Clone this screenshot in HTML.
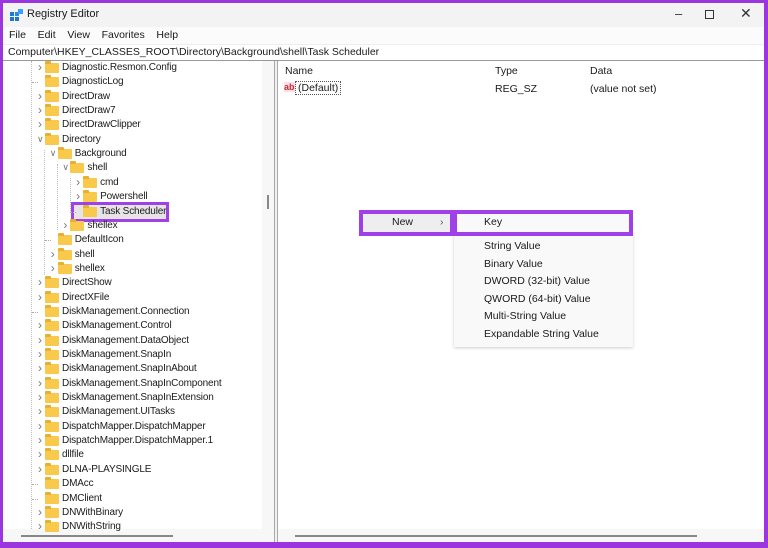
<!DOCTYPE html>
<html><head><meta charset="utf-8"><style>
*{margin:0;padding:0;box-sizing:border-box}
body{width:768px;height:548px;overflow:hidden;background:#9a35e0;font-family:"Liberation Sans",sans-serif;font-size:10.5px;color:#1a1a1a;position:relative}
.win{position:absolute;left:3px;top:3px;width:761px;height:539px;background:#fff;overflow:hidden}
.a{position:absolute;white-space:nowrap}
.row{position:absolute;height:14px;line-height:14px;white-space:nowrap;font-size:10px;letter-spacing:-0.15px}
.fold{position:absolute;width:14px;height:10px;background:#f8c94a;border-radius:1px;top:2px}
.fold:before{content:"";position:absolute;left:0;top:-2px;width:6px;height:3px;background:#e8b030;border-radius:1px 1px 0 0}
.chev{position:absolute;top:0;color:#777;font-size:9px}
.dot{position:absolute;top:7px;width:6px;border-top:1px dotted #aaa}
</style></head><body>
<div class="win">
<div class="a" style="left:0;top:0;width:761px;height:24px;background:#f3f3f3"></div>
<svg class="a" style="left:7px;top:6px" width="13" height="13"><rect x="0" y="3" width="4" height="4" fill="#1e78d0"/><rect x="5" y="3" width="4" height="4" fill="#2a8ae0"/><rect x="0" y="8" width="4" height="4" fill="#1e78d0"/><rect x="5" y="8" width="4" height="4" fill="#1e78d0"/><rect x="8" y="0" width="5" height="5" fill="#3aa0ff"/></svg>
<div class="a" style="left:24px;top:5px;font-size:11px">Registry Editor</div>
<div class="a" style="left:672px;top:3px;font-size:13px;color:#333">–</div>
<div class="a" style="left:702px;top:7px;width:9px;height:9px;border:1px solid #333"></div>
<div class="a" style="left:737px;top:2px;font-size:14px;color:#333">✕</div>
<div class="a" style="left:0;top:24px;width:761px;height:17px;background:#fbfbfb"></div>
<div class="a" style="left:6px;top:26px;font-size:10.5px">File&nbsp;&nbsp;&nbsp; Edit&nbsp;&nbsp;&nbsp; View&nbsp;&nbsp;&nbsp; Favorites&nbsp;&nbsp;&nbsp; Help</div>
<div class="a" style="left:0;top:41px;width:761px;height:17px;background:#fff;border-top:1px solid #eee;border-bottom:1px solid #999"></div>
<div class="a" style="left:5px;top:43px;font-size:10.5px">Computer\HKEY_CLASSES_ROOT\Directory\Background\shell\Task Scheduler</div>
<div class="a" style="left:259px;top:58px;width:12px;height:468px;background:#f7f7f7"></div>
<div class="a" style="left:264px;top:192px;width:2px;height:14px;background:#888"></div>
<div class="a" style="left:271px;top:58px;width:4px;height:481px;border-left:1px solid #aaa;border-right:1px solid #aaa;background:#f0f0f0"></div>
<div class="a" style="left:0;top:526px;width:271px;height:13px;background:#f7f7f7"></div>
<div class="a" style="left:18px;top:532px;width:152px;height:2px;background:#888"></div>
<div class="a" style="left:275px;top:526px;width:486px;height:13px;background:#f7f7f7"></div>
<div class="a" style="left:292px;top:532px;width:402px;height:2px;background:#888"></div>
<div class="a" style="left:28px;top:58px;height:468px;border-left:1px dotted #bbb"></div>
<div class="a" style="left:41px;top:147px;height:125px;border-left:1px dotted #bbb"></div>
<div class="a" style="left:54px;top:161px;height:66px;border-left:1px dotted #bbb"></div>
<div class="a" style="left:67px;top:175px;height:35px;border-left:1px dotted #bbb"></div>
<div class="a" style="left:68px;top:199px;width:98px;height:20px;border:3px solid #a040e8;background:#e5e5e5"></div>
<div id="tree"></div>
<div class="a" style="left:282px;top:62px">Name</div>
<div class="a" style="left:492px;top:62px">Type</div>
<div class="a" style="left:587px;top:62px">Data</div>
<div class="a" style="left:281px;top:79px;font-size:9px;font-weight:bold;color:#c0302a;background:#fde;line-height:10px">ab</div>
<div class="a" style="left:292px;top:78px;border:1px dotted #555;padding:0 2px">(Default)</div>
<div class="a" style="left:492px;top:80px">REG_SZ</div>
<div class="a" style="left:587px;top:80px">(value not set)</div>
<div class="a" style="left:451px;top:231px;width:179px;height:113px;background:#f9f9f9;box-shadow:0 1px 3px rgba(0,0,0,.2)"></div>
<div class="a" style="left:356px;top:207px;width:274px;height:26px;background:#a040e8"></div>
<div class="a" style="left:360px;top:211px;width:87px;height:18px;background:#eee"></div>
<div class="a" style="left:389px;top:213px">New</div>
<div class="a" style="left:437px;top:213px;color:#555">›</div>
<div class="a" style="left:454px;top:211px;width:172px;height:18px;background:#f9f9f9"></div>
<div class="a" style="left:481px;top:213px">Key</div>
<div class="a" style="left:481px;top:237px">String Value</div>
<div class="a" style="left:481px;top:255px">Binary Value</div>
<div class="a" style="left:481px;top:272px">DWORD (32-bit) Value</div>
<div class="a" style="left:481px;top:290px">QWORD (64-bit) Value</div>
<div class="a" style="left:481px;top:307px">Multi-String Value</div>
<div class="a" style="left:481px;top:325px">Expandable String Value</div>
</div>
<script>
var items=[["Diagnostic.Resmon.Config",1,">"],["DiagnosticLog",1,""],["DirectDraw",1,">"],["DirectDraw7",1,">"],["DirectDrawClipper",1,">"],["Directory",1,"v"],["Background",2,"v"],["shell",3,"v"],["cmd",4,">"],["Powershell",4,">"],["Task Scheduler",4,""],["shellex",3,">"],["DefaultIcon",2,""],["shell",2,">"],["shellex",2,">"],["DirectShow",1,">"],["DirectXFile",1,">"],["DiskManagement.Connection",1,""],["DiskManagement.Control",1,">"],["DiskManagement.DataObject",1,">"],["DiskManagement.SnapIn",1,">"],["DiskManagement.SnapInAbout",1,">"],["DiskManagement.SnapInComponent",1,">"],["DiskManagement.SnapInExtension",1,">"],["DiskManagement.UITasks",1,">"],["DispatchMapper.DispatchMapper",1,">"],["DispatchMapper.DispatchMapper.1",1,">"],["dllfile",1,">"],["DLNA-PLAYSINGLE",1,">"],["DMAcc",1,""],["DMClient",1,""],["DNWithBinary",1,">"],["DNWithString",1,">"]];
var h="";
items.forEach(function(it,i){var y=58+i*14.35;var ind=(it[1]-1)*12.7;var cx=35+ind,fx=42+ind,tx=59+ind;
var c;
if(it[2]==">")c='<span class="chev" style="left:'+cx+'px;font-size:12px;top:-1px">›</span>';
else if(it[2]=="v")c='<span class="chev" style="left:'+(cx-1)+'px;top:-1px">&#x2228;</span>';
else c='<span class="dot" style="left:'+(cx-6)+'px"></span>';
h+='<div class="row" style="left:0;top:'+y+'px;width:260px">'+c+'<span class="fold" style="left:'+fx+'px"></span><span style="position:absolute;left:'+tx+'px">'+it[0]+'</span></div>';});
document.getElementById("tree").innerHTML=h;
</script>
</body></html>
